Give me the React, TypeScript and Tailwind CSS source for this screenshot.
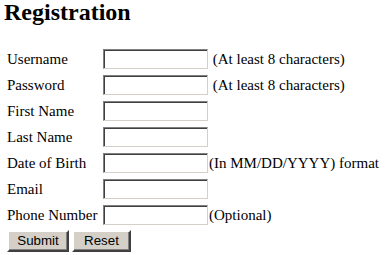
const fields: { label: string; hint?: string }[] = [
  { label: "Username", hint: " (At least 8 characters)" },
  { label: "Password", hint: " (At least 8 characters)" },
  { label: "First Name" },
  { label: "Last Name" },
  { label: "Date of Birth", hint: "(In MM/DD/YYYY) format" },
  { label: "Email" },
  { label: "Phone Number", hint: "(Optional)" },
];

function Field({ label, hint }: { label: string; hint?: string }) {
  return (
    <div className="flex h-[26px] items-center">
      <div className="w-[96px] whitespace-nowrap">{label}</div>
      <input
        type={label === "Password" ? "password" : "text"}
        className="h-[20px] w-[105px] border border-t-[#808080] border-l-[#808080] border-b-[#d4d0c8] border-r-[#d4d0c8] bg-white px-[2px] shadow-[inset_1px_1px_0_#404040] outline-none"
      />
      {hint && <span className="whitespace-pre pl-[1px]">{hint}</span>}
    </div>
  );
}

function Button({ children, w }: { children: string; w: string }) {
  return (
    <button
      type="button"
      className={`${w} h-[22px] border-2 border-t-white border-l-white border-b-[#404040] border-r-[#404040] bg-[#d4d0c8] text-center font-['Liberation_Sans',Arial,sans-serif] text-[13.33px] leading-none text-black shadow-[inset_-1px_-1px_0_#808080]`}
    >
      {children}
    </button>
  );
}

export default function App() {
  return (
    <div className="h-[255px] w-[385px] bg-white font-['Liberation_Serif','Times_New_Roman',serif] text-[15px] text-black">
      <h2 className="h-[24px] pl-[4px] text-[24px] font-bold leading-[24px]">Registration</h2>

      <form className="mt-[22px] pl-[7px]" onSubmit={(e) => e.preventDefault()}>
        {fields.map((f) => (
          <Field key={f.label} {...f} />
        ))}
        <div className="flex h-[26px] items-center gap-[3px]">
          <Button w="w-[62px]">Submit</Button>
          <Button w="w-[59px]">Reset</Button>
        </div>
      </form>
    </div>
  );
}
